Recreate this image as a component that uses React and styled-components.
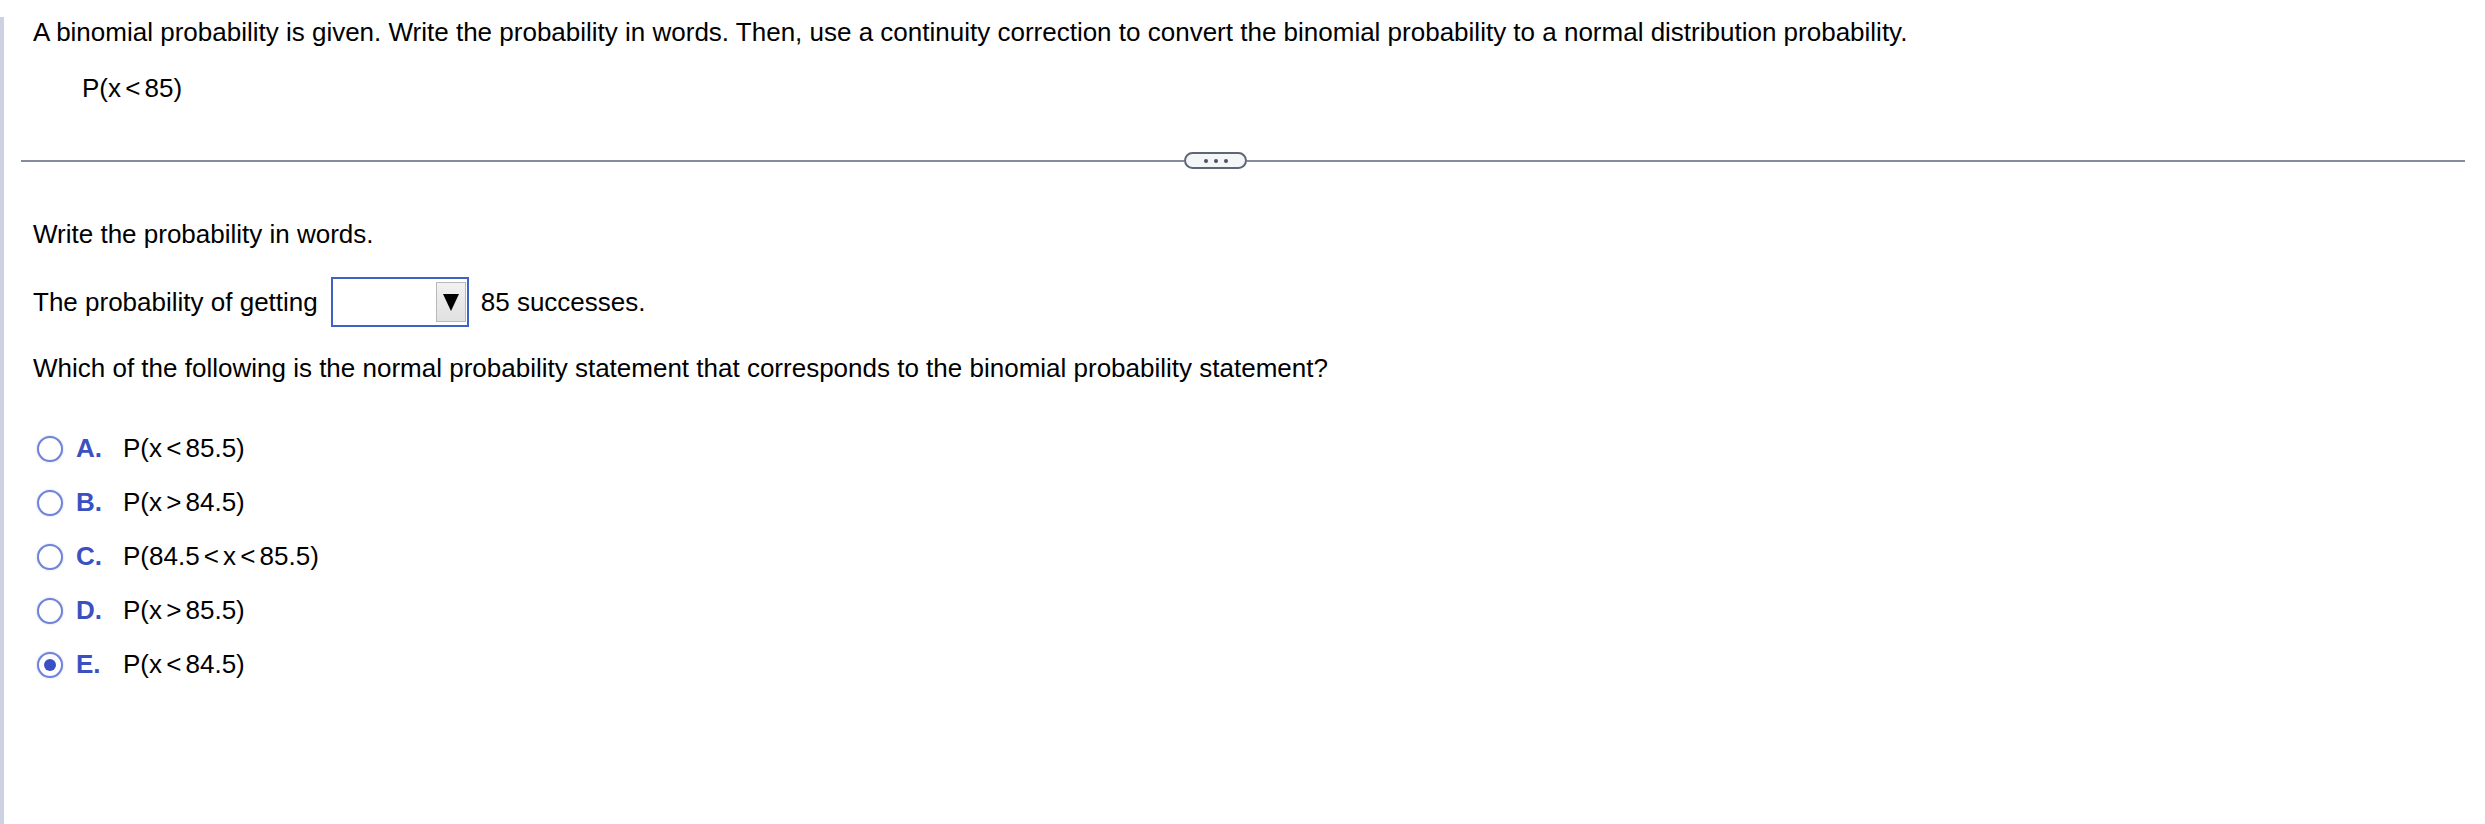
import React from "react";
import styled, { createGlobalStyle } from "styled-components";

const GlobalStyle = createGlobalStyle`
  html, body {
    margin: 0;
    padding: 0;
    background: #ffffff;
  }
  body {
    font-family: "Liberation Sans", Arial, Helvetica, sans-serif;
    font-size: 26px;
    color: #000000;
  }
`;

const Page = styled.div`
  min-height: 824px;
  border-left: 4px solid #cdd2e2;
  box-sizing: border-box;
`;

const Text = styled.p`
  margin: ${(p) => p.$top || 0}px 0 0 ${(p) => p.$indent || 29}px;
  line-height: 30px;
`;

const Op = styled.span`
  padding: 0 0.16em;
`;

const Divider = styled.div`
  display: grid;
  grid-template-columns: 1163px auto 1fr;
  align-items: center;
  height: 17px;
  margin: 49px 20px 0 17px;
`;

const Rule = styled.div`
  height: 2px;
  background: #848c9c;
`;

const MoreButton = styled.button`
  width: 63px;
  height: 17px;
  box-sizing: border-box;
  border: 2px solid #5c6677;
  border-radius: 9px;
  background: #f4f5f7;
  padding: 0;
  display: flex;
  align-items: center;
  justify-content: center;
  gap: 6px;
`;

const Dot = styled.span`
  width: 4px;
  height: 4px;
  border-radius: 50%;
  background: #4b5361;
`;

const FillRow = styled.div`
  display: flex;
  align-items: center;
  height: 50px;
  margin: 28px 0 0 29px;
  line-height: 30px;
`;

const Select = styled.div`
  width: 138px;
  height: 50px;
  box-sizing: border-box;
  border: 2px solid #3f62c6;
  background: #fff;
  margin: 0 12px 0 13px;
  display: flex;
  justify-content: flex-end;
  align-items: flex-start;
  padding: 3px 1px 0 0;
`;

const SelectButton = styled.span`
  width: 30px;
  height: 40px;
  box-sizing: border-box;
  border: 1px solid #b9b9b9;
  background: linear-gradient(#f1f1f1, #e1e1e1);
  display: flex;
  align-items: center;
  justify-content: center;
`;

const Options = styled.div`
  margin: 38px 0 0 33px;
`;

const Option = styled.label`
  display: flex;
  align-items: center;
  height: 54px;
  line-height: 30px;
`;

const Radio = styled.span`
  width: 26px;
  height: 26px;
  box-sizing: border-box;
  border-radius: 50%;
  border: 2.5px solid #6f83d8;
  box-shadow: 0 0 2px rgba(111, 131, 216, 0.5);
  background: #fff;
  display: flex;
  align-items: center;
  justify-content: center;
  margin: 2px 13px 0 0;

  &::after {
    content: "";
    width: 12px;
    height: 12px;
    border-radius: 50%;
    background: ${(p) => (p.$checked ? "#3b50c6" : "transparent")};
  }
`;

const Letter = styled.span`
  width: 47px;
  font-weight: bold;
  color: #3b50c1;
`;

const options = [
  { key: "A", parts: ["P(x", "<", "85.5)"] },
  { key: "B", parts: ["P(x", ">", "84.5)"] },
  { key: "C", parts: ["P(84.5", "<", "x", "<", "85.5)"] },
  { key: "D", parts: ["P(x", ">", "85.5)"] },
  { key: "E", parts: ["P(x", "<", "84.5)"], checked: true },
];

const Expr = ({ parts }) => (
  <span>
    {parts.map((p, i) =>
      p === "<" || p === ">" ? <Op key={i}>{p}</Op> : <React.Fragment key={i}>{p}</React.Fragment>
    )}
  </span>
);

export default function App() {
  return (
    <>
      <GlobalStyle />
      <Page>
        <Text $top={17}>
          A binomial probability is given. Write the probability in words. Then, use a continuity
          correction to convert the binomial probability to a normal distribution probability.
        </Text>
        <Text $top={26} $indent={78}>
          <Expr parts={["P(x", "<", "85)"]} />
        </Text>

        <Divider>
          <Rule />
          <MoreButton aria-label="more">
            <Dot />
            <Dot />
            <Dot />
          </MoreButton>
          <Rule />
        </Divider>

        <Text $top={50}>Write the probability in words.</Text>

        <FillRow>
          <span>The probability of getting</span>
          <Select>
            <SelectButton>
              <svg width="18" height="20" viewBox="0 0 18 20">
                <polygon points="1,2 17,2 9,19" fill="#000" />
              </svg>
            </SelectButton>
          </Select>
          <span>85 successes.</span>
        </FillRow>

        <Text $top={26}>
          Which of the following is the normal probability statement that corresponds to the binomial
          probability statement?
        </Text>

        <Options>
          {options.map((o) => (
            <Option key={o.key}>
              <Radio $checked={o.checked} />
              <Letter>{o.key}.</Letter>
              <Expr parts={o.parts} />
            </Option>
          ))}
        </Options>
      </Page>
    </>
  );
}
